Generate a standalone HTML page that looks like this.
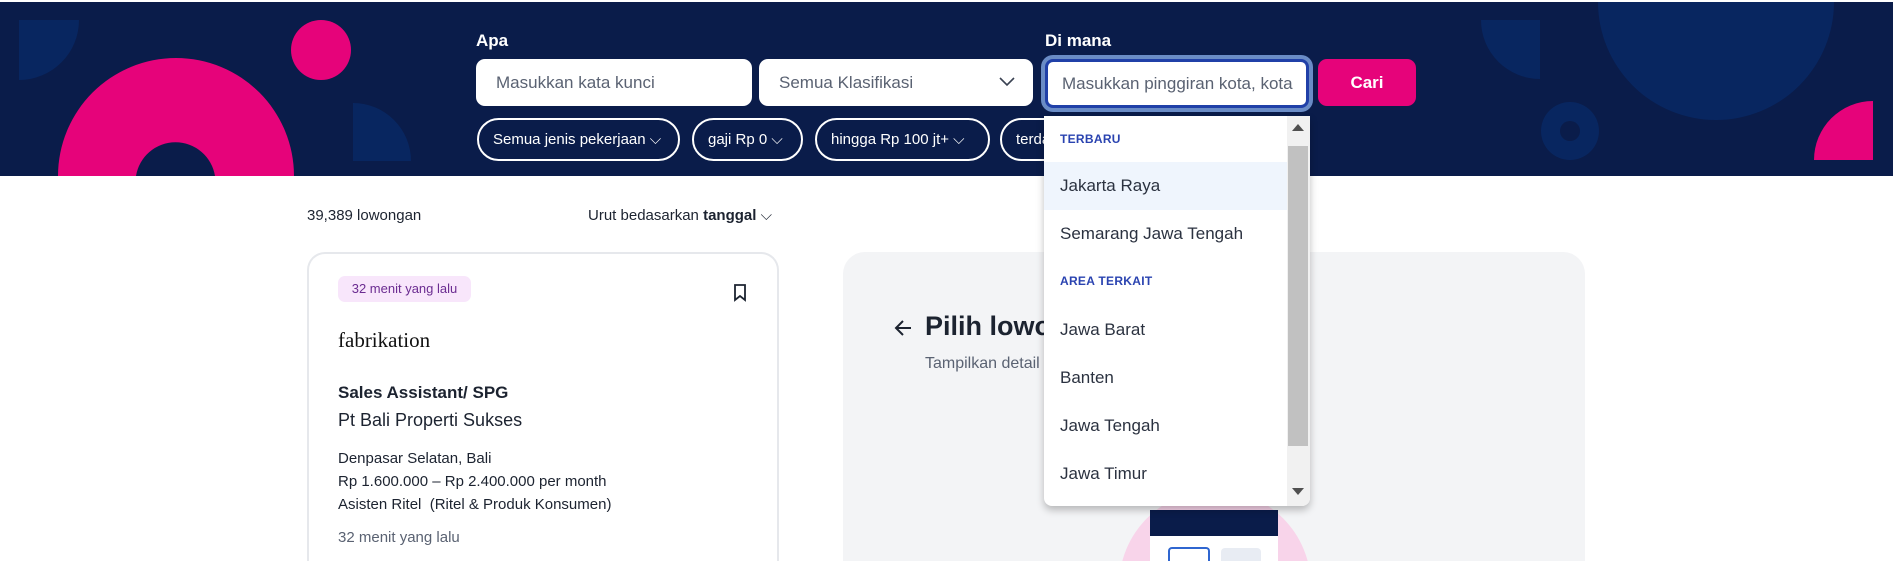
<!DOCTYPE html>
<html><head><meta charset="utf-8">
<style>
*{box-sizing:border-box;margin:0;padding:0}
html,body{width:1893px;height:561px;overflow:hidden}
body{background:#fff;font-family:"Liberation Sans",Arial,sans-serif;color:#1c2330}
#wrap{position:relative;width:1893px;height:561px;overflow:hidden}
.hdr{position:absolute;left:0;top:2px;width:1893px;height:174px;background:#0a1c4a;overflow:hidden}
.abs{position:absolute}
.lbl{color:#fff;font-weight:bold;font-size:17px}
.inp{background:#fff;border-radius:9px;height:47px;font-size:17px;color:#5a6272;padding:14px 20px;white-space:nowrap;overflow:hidden}
.pill{border:2px solid #fff;border-radius:22px;height:43px;color:#fff;font-size:15px;padding:11px 14px;white-space:nowrap;overflow:hidden}
.dd{position:absolute;left:1044px;top:116px;width:266px;height:390px;background:#fff;border-radius:0 0 8px 8px;box-shadow:0 4px 8px rgba(0,0,0,.25);z-index:5;overflow:hidden}
.dd .it{position:absolute;left:16px;font-size:17px;color:#2b3240}
.dd .hd{position:absolute;left:16px;font-size:12px;font-weight:bold;color:#2a43b0;letter-spacing:.3px}
</style></head><body><div id="wrap">
<div class="hdr">
<svg class="abs" style="left:0;top:-2px" width="1893" height="176">
<path d="M19 20 H79 A60 60 0 0 1 19 80Z" fill="#082660"/>
<circle cx="321" cy="50" r="30" fill="#e6037a"/>
<path d="M58 176 A118 118 0 0 1 294 176 H215 A40 40 0 0 0 136 176Z" fill="#e6037a"/>
<path d="M353 103 A58 58 0 0 1 411 161 H353Z" fill="#082660"/>
<path d="M1540 20 V79 A59 59 0 0 1 1481 20Z" fill="#082660"/>
<path d="M1598 2 A118 118 0 0 0 1834 2Z" fill="#082660"/>
<circle cx="1570" cy="131" r="29" fill="#082660"/>
<circle cx="1570" cy="131" r="10" fill="#0a1c4a"/>
<path d="M1814 160 A59 59 0 0 1 1873 101 V160Z" fill="#e6037a"/>
</svg>
</div>

<div class="abs lbl" style="left:476px;top:31px">Apa</div>
<div class="abs lbl" style="left:1045px;top:31px">Di mana</div>
<div class="abs inp" style="left:476px;top:59px;width:276px">Masukkan kata kunci</div>
<div class="abs inp" style="left:759px;top:59px;width:274px">Semua Klasifikasi
<svg class="abs" style="right:18px;top:18px" width="16" height="10"><path d="M1 1 L8 8 L15 1" stroke="#3a4252" stroke-width="1.6" fill="none"/></svg></div>
<div class="abs" style="left:1041px;top:55px;width:272px;height:57px;border-radius:12px;background:#6a8cc6"></div>
<div class="abs inp" style="left:1045px;top:59px;width:264px;height:49px;border:3px solid #2040a8;padding:12px 14px;border-radius:8px">Masukkan pinggiran kota, kota</div>
<div class="abs" style="left:1318px;top:59px;width:98px;height:47px;border-radius:9px;background:#e6037a;color:#fff;font-weight:bold;font-size:17px;text-align:center;line-height:47px">Cari</div>

<div class="abs pill" style="left:477px;top:118px;width:203px">Semua jenis pekerjaan ⌵</div>
<div class="abs pill" style="left:692px;top:118px;width:111px">gaji Rp 0 ⌵</div>
<div class="abs pill" style="left:815px;top:118px;width:175px">hingga Rp 100 jt+ ⌵</div>
<div class="abs pill" style="left:1000px;top:118px;width:120px">terdaftar</div>

<div class="abs" style="left:307px;top:207px;font-size:15px">39,389 lowongan</div>
<div class="abs" style="left:588px;top:207px;font-size:15px">Urut bedasarkan <b>tanggal</b> ⌵</div>

<div class="abs" style="left:307px;top:252px;width:472px;height:309px;border:2px solid #e6e8ec;border-bottom:none;border-radius:18px 18px 0 0"></div>
<div class="abs" style="left:338px;top:276px;width:133px;height:26px;background:#f8e6fb;border-radius:7px;color:#6b2c91;font-size:13px;line-height:26px;text-align:center">32 menit yang lalu</div>
<svg class="abs" style="left:733px;top:284px" width="14" height="18"><path d="M2 1 H12 V16 L7 12 L2 16Z" stroke="#1c2330" stroke-width="1.8" fill="none"/></svg>
<div class="abs" style="left:338px;top:328px;font-family:'Liberation Serif',serif;font-size:21px;color:#111">fabrikation</div>
<div class="abs" style="left:338px;top:383px;font-size:17px;font-weight:bold">Sales Assistant/ SPG</div>
<div class="abs" style="left:338px;top:410px;font-size:18px">Pt Bali Properti Sukses</div>
<div class="abs" style="left:338px;top:447px;font-size:15px;line-height:23px">Denpasar Selatan, Bali<br>Rp 1.600.000 – Rp 2.400.000 per month<br>Asisten Ritel&nbsp; (Ritel &amp; Produk Konsumen)</div>
<div class="abs" style="left:338px;top:529px;font-size:15px;color:#5a6272">32 menit yang lalu</div>

<div class="abs" style="left:843px;top:252px;width:742px;height:309px;background:#f3f4f6;border-radius:22px 22px 0 0;overflow:hidden">
<svg class="abs" style="left:276px;top:238px" width="192" height="71"><circle cx="96" cy="96" r="96" fill="#f8d4ea"/></svg>
<div class="abs" style="left:307px;top:258px;width:128px;height:26px;background:#0a1c4a"></div>
<div class="abs" style="left:307px;top:284px;width:128px;height:25px;background:#fff"></div>
<div class="abs" style="left:325px;top:295px;width:42px;height:14px;border:2px solid #2f66d0;border-bottom:none;border-radius:4px 4px 0 0"></div>
<div class="abs" style="left:378px;top:296px;width:40px;height:13px;background:#e8ecf3;border-radius:4px 4px 0 0"></div>
</div>
<svg class="abs" style="left:893px;top:318px" width="20" height="20"><path d="M18 10 H3 M10 3 L3 10 L10 17" stroke="#1c2330" stroke-width="2" fill="none"/></svg>
<div class="abs" style="left:925px;top:311px;font-size:27px;font-weight:bold;color:#1c2330">Pilih lowongan</div>
<div class="abs" style="left:925px;top:355px;font-size:16px;color:#5a6272">Tampilkan detail di sini</div>

<div class="dd">
<div class="hd" style="top:16px">TERBARU</div>
<div class="abs" style="left:0;top:46px;width:243px;height:48px;background:#eff5fd"></div>
<div class="it" style="top:60px">Jakarta Raya</div>
<div class="it" style="top:108px">Semarang Jawa Tengah</div>
<div class="hd" style="top:158px">AREA TERKAIT</div>
<div class="it" style="top:204px">Jawa Barat</div>
<div class="it" style="top:252px">Banten</div>
<div class="it" style="top:300px">Jawa Tengah</div>
<div class="it" style="top:348px">Jawa Timur</div>
<div class="abs" style="left:243px;top:0;width:23px;height:390px;background:#f1f1f1"></div>
<div class="abs" style="left:244px;top:30px;width:20px;height:300px;background:#c1c1c1"></div>
<div class="abs" style="left:248px;top:8px;width:0;height:0;border-left:6px solid transparent;border-right:6px solid transparent;border-bottom:7px solid #505050"></div>
<div class="abs" style="left:248px;top:372px;width:0;height:0;border-left:6px solid transparent;border-right:6px solid transparent;border-top:7px solid #505050"></div>
</div>
</div></body></html>
